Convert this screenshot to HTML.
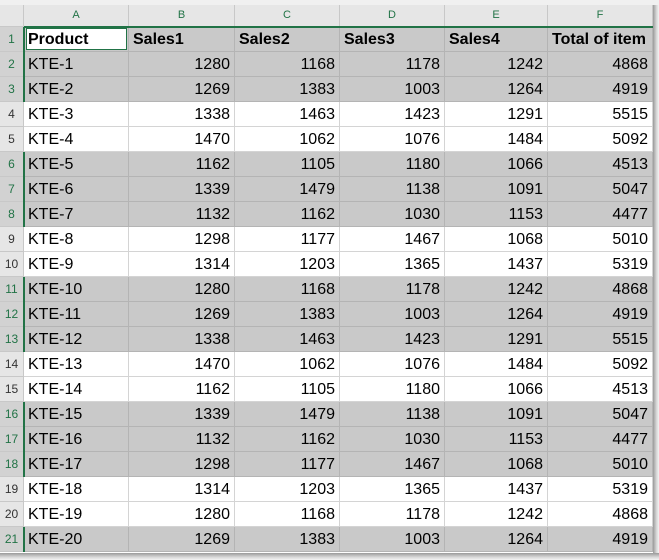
<!DOCTYPE html><html><head><style>
body{margin:0;width:659px;height:560px;background:#fff;position:relative;overflow:hidden;font-family:"Liberation Sans",sans-serif}
.top{position:absolute;left:0;top:0;width:659px;height:5px;background:#f0f0f0}
.sh{position:absolute}
.c{position:absolute;box-sizing:border-box;height:25px;line-height:25px;font-size:16px;padding:0 4px;white-space:nowrap;overflow:hidden;border-right:1px solid #d4d4d4;border-bottom:1px solid #d4d4d4;color:#000}
.g{background:#c9c9c9;border-color:#b4b4b4}
.r{text-align:right}
.h{position:absolute;box-sizing:border-box;background:#e6e6e6;color:#333;font-size:11px;text-align:center;border-right:1px solid #c8c8c8;border-bottom:1px solid #c8c8c8}
.hs{background:#d2d2d2;color:#217346}
b{font-weight:bold}
</style></head><body>
<div class="top"></div>
<div id="g"></div>
<script>
var cols=[24,129,235,340,445,548,653],L="ABCDEF";
var rows=[["Product","Sales1","Sales2","Sales3","Sales4","Total of item"],
["KTE-1",1280,1168,1178,1242,4868],["KTE-2",1269,1383,1003,1264,4919],["KTE-3",1338,1463,1423,1291,5515],["KTE-4",1470,1062,1076,1484,5092],["KTE-5",1162,1105,1180,1066,4513],["KTE-6",1339,1479,1138,1091,5047],["KTE-7",1132,1162,1030,1153,4477],["KTE-8",1298,1177,1467,1068,5010],["KTE-9",1314,1203,1365,1437,5319],["KTE-10",1280,1168,1178,1242,4868],["KTE-11",1269,1383,1003,1264,4919],["KTE-12",1338,1463,1423,1291,5515],["KTE-13",1470,1062,1076,1484,5092],["KTE-14",1162,1105,1180,1066,4513],["KTE-15",1339,1479,1138,1091,5047],["KTE-16",1132,1162,1030,1153,4477],["KTE-17",1298,1177,1467,1068,5010],["KTE-18",1314,1203,1365,1437,5319],["KTE-19",1280,1168,1178,1242,4868],["KTE-20",1269,1383,1003,1264,4919]];
var gray=[1,2,3,6,7,8,11,12,13,16,17,18,21];
var h='<div class="h" style="left:0;top:5px;width:24px;height:22px"></div>';
for(var j=0;j<6;j++)h+='<div class="h" style="left:'+cols[j]+'px;top:5px;width:'+(cols[j+1]-cols[j])+'px;height:22px;line-height:21px;color:#217346">'+L[j]+'</div>';
for(var i=0;i<21;i++){var n=i+1,t=27+25*i,gr=gray.indexOf(n)>=0;
h+='<div class="h'+(gr?' hs':'')+'" style="left:0;top:'+t+'px;width:24px;height:25px;line-height:25px;font-size:12px">'+n+'</div>';
for(var j=0;j<6;j++){var v=rows[i][j];
h+='<div class="c'+(gr?' g':'')+(j>0&&i>0?' r':'')+'" style="left:'+cols[j]+'px;top:'+t+'px;width:'+(cols[j+1]-cols[j])+'px">'+(i==0?'<b>'+v+'</b>':v)+'</div>';}
if(gr)h+='<div style="position:absolute;left:23px;top:'+t+'px;width:2px;height:25px;background:#217346"></div>';}
h+='<div style="position:absolute;left:24px;top:26px;width:629px;height:2px;background:#217346"></div>';
h+='<div style="position:absolute;left:26px;top:28px;width:101px;height:22px;border:1px solid #217346;background:#fff;font-size:16px;line-height:22px;padding-left:1px;box-sizing:border-box"><b>Product</b></div>';
h+='<div class="sh" style="left:653px;top:5px;width:6px;height:555px;background:linear-gradient(90deg,#9a9a9a,#d8d8d8 60%,#f4f4f4)"></div><div class="sh" style="left:0;top:553px;width:659px;height:7px;background:linear-gradient(180deg,#9a9a9a,#d8d8d8 60%,#f4f4f4)"></div>';
document.getElementById('g').innerHTML=h;
</script>
</body></html>
